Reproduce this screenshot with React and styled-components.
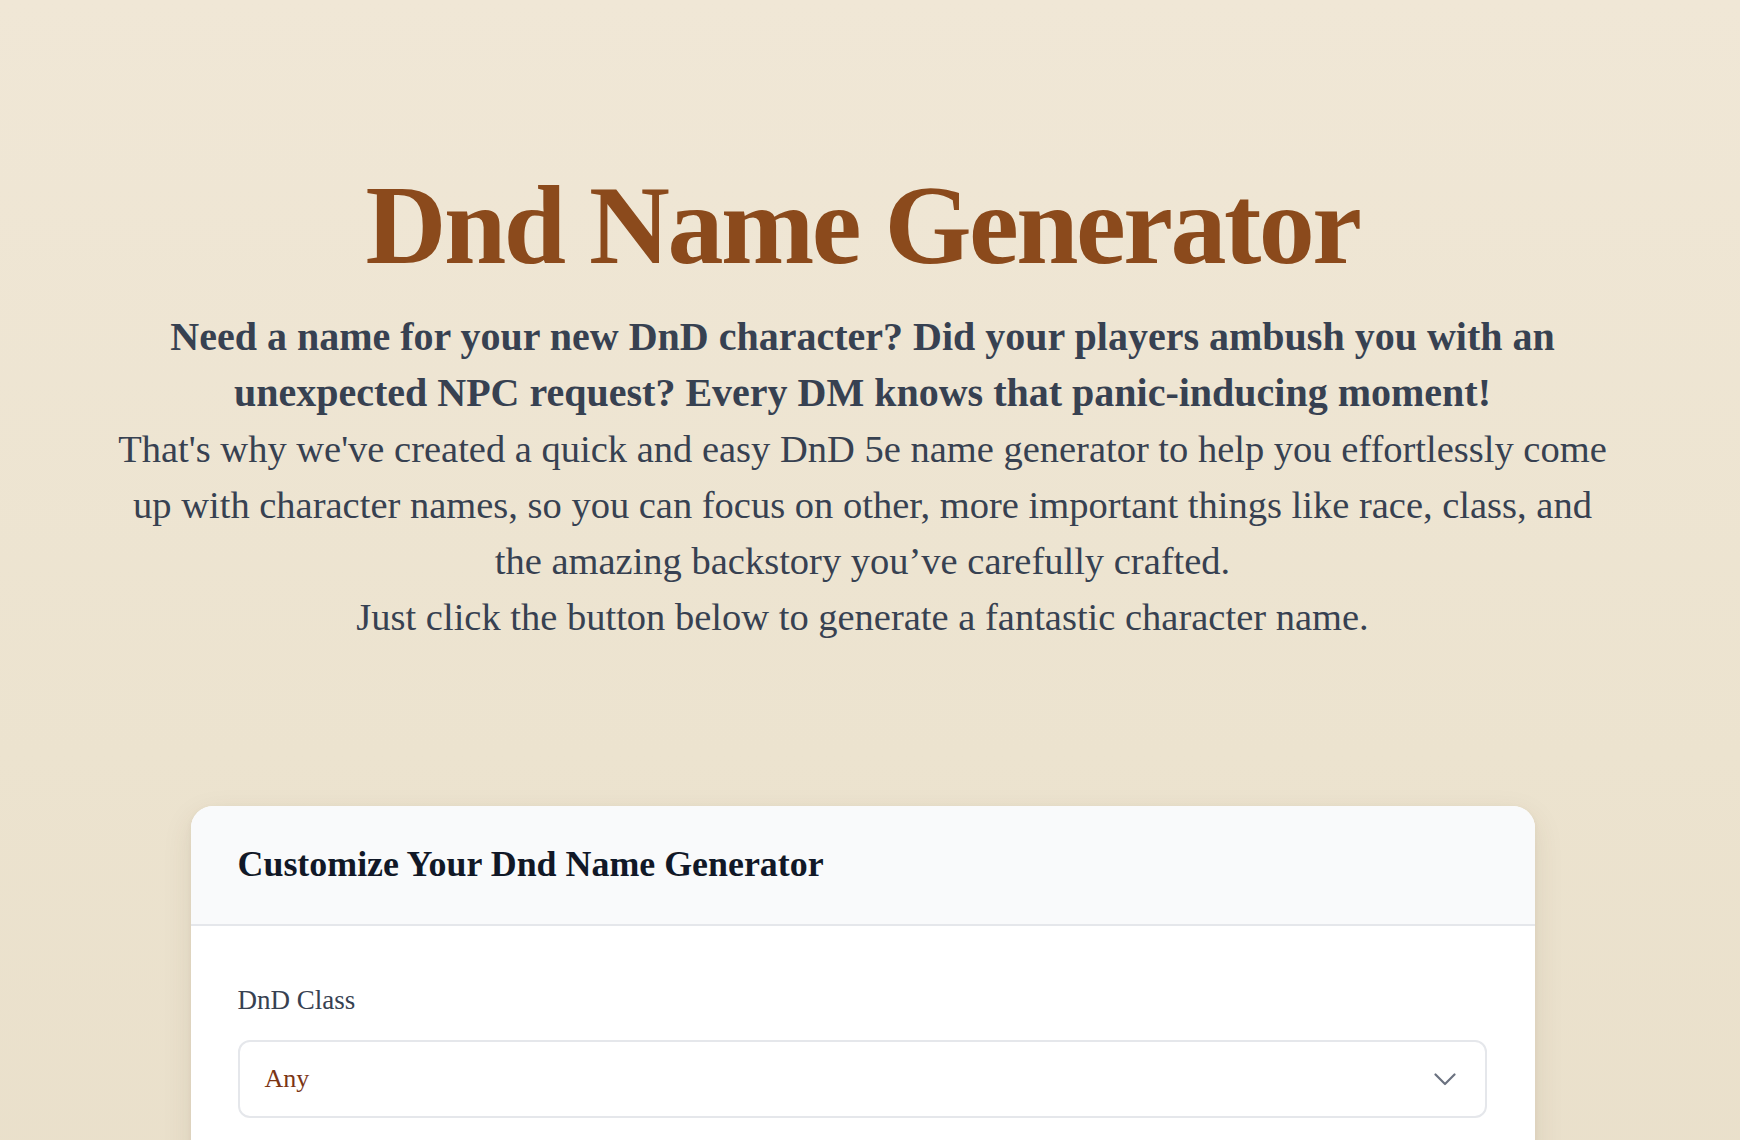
import React from "react";
import styled, { createGlobalStyle } from "styled-components";

const Global = createGlobalStyle`
  html, body { margin: 0; padding: 0; }
  body {
    font-family: "Liberation Serif", "Times New Roman", serif;
    background: #efe6d4;
  }
  * { box-sizing: border-box; }
`;

const Page = styled.div`
  min-height: 100vh;
  background: linear-gradient(180deg, #f0e7d6 0%, #ece3cf 60%, #e9dfca 100%);
  padding: 169px 15px 80px 0;
  display: flex;
  flex-direction: column;
  align-items: center;
`;

const Hero = styled.header`
  display: flex;
  flex-direction: column;
  align-items: center;
  text-align: center;
  width: 100%;
  max-width: 1600px;
`;

const Title = styled.h1`
  margin: 0 0 28px;
  font-family: "Liberation Serif", serif;
  font-weight: 700;
  font-size: 112px;
  line-height: 112px;
  letter-spacing: -2.5px;
  color: #8b4a1c;
`;

const Lead = styled.p`
  margin: 0;
  font-size: ${(p) => (p.$bold ? "40px" : "38.5px")};
  line-height: 56px;
  color: #374151;
  font-weight: ${(p) => (p.$bold ? 700 : 400)};
  white-space: nowrap;
`;

const Card = styled.section`
  margin-top: 161px;
  width: 1344px;
  background: #ffffff;
  border-radius: 22px;
  box-shadow: 0 10px 30px rgba(80, 60, 30, 0.10), 0 2px 6px rgba(80, 60, 30, 0.05);
  overflow: hidden;
`;

const CardHeader = styled.div`
  background: #f9fafb;
  border-bottom: 2px solid #e5e7eb;
  padding: 37px 47px 39px;
`;

const CardTitle = styled.h2`
  margin: 0;
  font-size: 35.9px;
  line-height: 42px;
  font-weight: 700;
  color: #111827;
`;

const CardBody = styled.div`
  padding: 58px 48px 60px 47px;
  display: flex;
  flex-direction: column;
`;

const Field = styled.div`
  display: flex;
  flex-direction: column;
  gap: 24px;
`;

const Label = styled.label`
  font-size: 27px;
  line-height: 32px;
  color: #374151;
`;

const SelectBox = styled.div`
  height: 78px;
  border: 2px solid #e5e7eb;
  border-radius: 12px;
  padding: 0 29px 0 25px;
  display: flex;
  align-items: center;
  justify-content: space-between;
  background: #fff;
`;

const SelectValue = styled.span`
  font-size: 26px;
  color: #7b3414;
`;

const Chevron = () => (
  <svg width="22" height="13" viewBox="0 0 22 13" fill="none">
    <path d="M1.5 1.5 L11 11 L20.5 1.5" stroke="#6b7280" strokeWidth="2.2" strokeLinecap="round" strokeLinejoin="round" />
  </svg>
);

export default function App() {
  return (
    <>
      <Global />
      <Page>
        <Hero>
          <Title>Dnd Name Generator</Title>
          <Lead $bold>
            Need a name for your new DnD character? Did your players ambush you with an
            <br />
            unexpected NPC request? Every DM knows that panic-inducing moment!
          </Lead>
          <Lead>
            That's why we've created a quick and easy DnD 5e name generator to help you effortlessly come
            <br />
            up with character names, so you can focus on other, more important things like race, class, and
            <br />
            the amazing backstory you’ve carefully crafted.
          </Lead>
          <Lead>Just click the button below to generate a fantastic character name.</Lead>
        </Hero>
        <Card>
          <CardHeader>
            <CardTitle>Customize Your Dnd Name Generator</CardTitle>
          </CardHeader>
          <CardBody>
            <Field>
              <Label>DnD Class</Label>
              <SelectBox>
                <SelectValue>Any</SelectValue>
                <Chevron />
              </SelectBox>
            </Field>
          </CardBody>
        </Card>
      </Page>
    </>
  );
}
